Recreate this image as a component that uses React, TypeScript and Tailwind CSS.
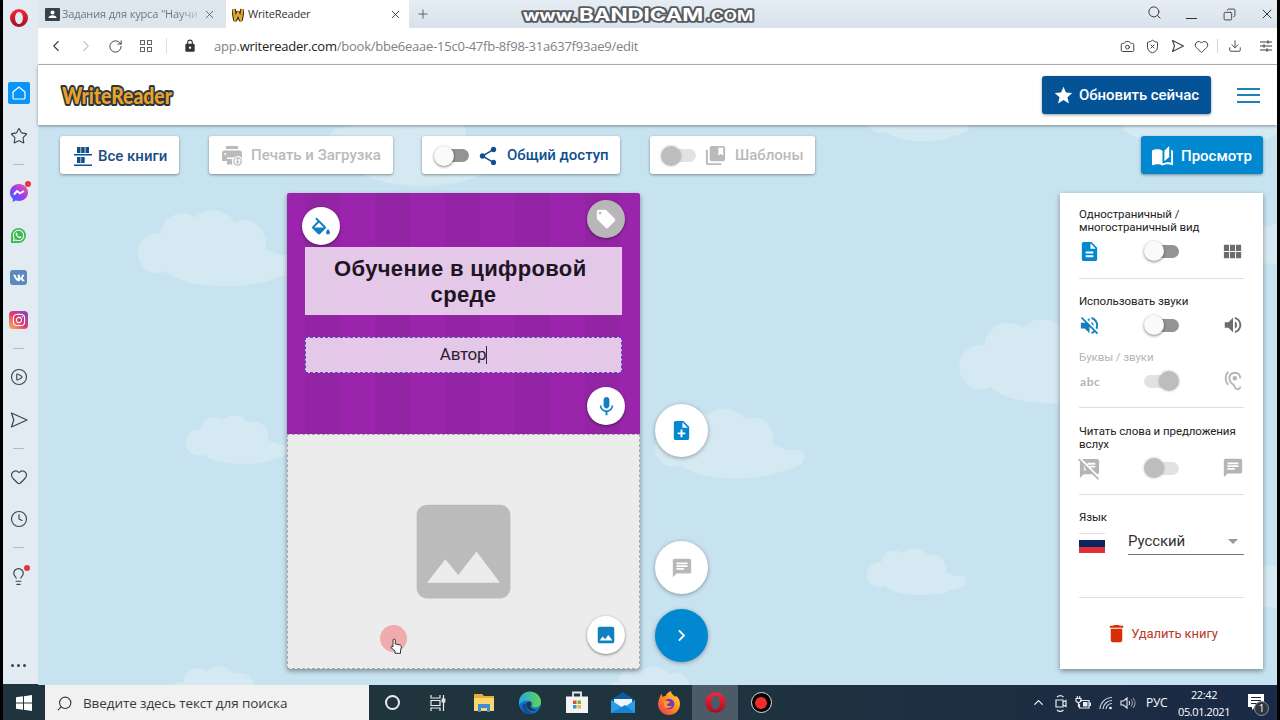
import type { ReactNode } from "react";
import {
  MdAutoStories,
  MdChat,
  MdChevronRight,
  MdCollectionsBookmark,
  MdDelete,
  MdDescription,
  MdHearing,
  MdImage,
  MdLocalOffer,
  MdLock,
  MdMic,
  MdNoteAdd,
  MdShare,
  MdSpeakerNotesOff,
  MdStar,
  MdViewModule,
  MdVolumeOff,
  MdVolumeUp,
} from "react-icons/md";
import { FaInstagram, FaVk, FaWhatsapp } from "react-icons/fa";
import {
  Camera,
  ChevronLeft,
  ChevronRight,
  ChevronUp,
  CirclePlay,
  Clock4,
  Copy,
  Download,
  Heart,
  Lightbulb,
  Plus,
  RotateCw,
  Search,
  ShieldX,
  Star,
  X,
} from "lucide-react";

function Toggle({ on = false, disabled = false }: { on?: boolean; disabled?: boolean }) {
  return (
    <span className={`flex h-5 w-[35px] items-center ${on ? "flex-row-reverse" : ""}`}>
      <span
        className={`z-10 h-5 w-5 shrink-0 rounded-full ${
          disabled
            ? "bg-[#bdbdbd] shadow-[0_0_3px_rgba(0,0,0,0.25)]"
            : "bg-[#fafafa] shadow-[0_1px_3px_rgba(0,0,0,0.5)]"
        }`}
      />
      <span
        className={`h-[13px] w-[25px] shrink-0 ${
          on ? "-mr-[10px] rounded-l-full" : "-ml-[10px] rounded-r-full"
        } ${disabled ? "bg-[#e2e2e2]" : "bg-[#939393]"}`}
      />
    </span>
  );
}

function OperaLogo({ className }: { className?: string }) {
  return (
    <svg viewBox="0 0 20 20" className={className}>
      <defs>
        <linearGradient id="opera" x1="0" y1="0" x2="0" y2="1">
          <stop offset="0" stopColor="#f8273f" />
          <stop offset="1" stopColor="#a70d20" />
        </linearGradient>
      </defs>
      <path
        fill="url(#opera)"
        fillRule="evenodd"
        d="M10 1a9 9 0 1 0 0 18 9 9 0 0 0 0-18Zm0 3c2.3 0 3.9 2.7 3.9 6s-1.6 6-3.9 6-3.9-2.7-3.9-6 1.6-6 3.9-6Z"
      />
    </svg>
  );
}

function SideCell({ children, dot = false }: { children: ReactNode; dot?: boolean }) {
  return (
    <div className="flex h-[42.5px] w-full shrink-0 items-center justify-center pr-1">
      <div className="relative">
        {children}
        {dot && <span className="absolute -top-0.5 -right-0.5 h-1.5 w-1.5 rounded-full bg-[#e8343c]" />}
      </div>
    </div>
  );
}

function SideDivider() {
  return (
    <div className="flex h-[14.5px] w-full shrink-0 items-center justify-center pr-1">
      <span className="h-px w-[11px] bg-[#b3bcc4]" />
    </div>
  );
}

function Sidebar() {
  return (
    <aside className="flex w-[35px] shrink-0 flex-col items-center bg-[#e2ebf2] text-[#3c4248]">
      <div className="flex h-[72px] w-full items-start justify-center pt-2 pr-1">
        <OperaLogo className="h-5 w-5" />
      </div>
      <SideCell>
        <div className="flex h-[22px] w-[22px] items-center justify-center rounded-[2px] bg-[#0a93fb]">
          <svg viewBox="0 0 16 16" className="h-4 w-4" fill="none" stroke="#fff" strokeWidth="1.2" strokeLinejoin="round">
            <path d="M2 7 8 2l6 5v5.500a1.500 1.500 0 0 1-1.500 1.500h-9A1.500 1.500 0 0 1 2 12.500Z" />
          </svg>
        </div>
      </SideCell>
      <SideCell>
        <Star size={18} strokeWidth={1.5} />
      </SideCell>
      <SideDivider />
      <SideCell dot>
        <svg viewBox="0 0 20 20" className="h-5 w-5">
          <defs>
            <linearGradient id="messenger" x1="0" y1="1" x2="1" y2="0">
              <stop offset="0" stopColor="#2b6bff" />
              <stop offset="0.5" stopColor="#9b3cf5" />
              <stop offset="1" stopColor="#ff5a7e" />
            </linearGradient>
          </defs>
          <path fill="url(#messenger)" d="M10 1C4.800 1 1 4.700 1 9.500c0 2.700 1 4.800 2.800 6.300V19l2.800-1.500c1 .3 2.200.5 3.400.5 5.200 0 9-3.700 9-8.500S15.200 1 10 1Z" />
          <path d="m5 11.500 3-3.500 3 2.300L15 8" fill="none" stroke="#fff" strokeWidth="2" />
        </svg>
      </SideCell>
      <SideCell>
        <div className="flex h-[15px] w-[15px] items-center justify-center rounded-full rounded-bl-[3px] bg-[#3fb955] text-white">
          <FaWhatsapp size={13} />
        </div>
      </SideCell>
      <SideCell>
        <div className="flex h-[15px] w-[17px] items-center justify-center rounded-[3px] bg-[#5b88bd] text-white">
          <FaVk size={12} />
        </div>
      </SideCell>
      <SideCell>
        <div className="flex h-[18px] w-[19px] items-center justify-center rounded-[4px] bg-linear-to-tr from-[#fdb34a] via-[#e2306e] to-[#7a3bc9] text-white">
          <FaInstagram size={14} />
        </div>
      </SideCell>
      <SideDivider />
      <SideCell>
        <CirclePlay size={18} strokeWidth={1.5} />
      </SideCell>
      <SideCell>
        <svg viewBox="0 0 18 18" className="h-[18px] w-[18px]" fill="none" stroke="currentColor" strokeWidth="1.2" strokeLinejoin="round">
          <path d="m1.500 2 15.500 7-15.500 7 2.300-7Z" />
        </svg>
      </SideCell>
      <SideDivider />
      <SideCell>
        <Heart size={18} strokeWidth={1.5} />
      </SideCell>
      <SideCell>
        <Clock4 size={18} strokeWidth={1.5} />
      </SideCell>
      <SideDivider />
      <SideCell dot>
        <Lightbulb size={19} strokeWidth={1.5} />
      </SideCell>
      <div className="mt-auto flex w-full justify-center gap-[3px] pr-1 pb-[17px]">
        <span className="h-[3px] w-[3px] rounded-full bg-[#3c4248]" />
        <span className="h-[3px] w-[3px] rounded-full bg-[#3c4248]" />
        <span className="h-[3px] w-[3px] rounded-full bg-[#3c4248]" />
      </div>
    </aside>
  );
}

function TabBar() {
  return (
    <div className="relative flex h-7 shrink-0 items-stretch bg-linear-to-b from-[#e6edf4] to-[#d9e2eb] font-['Open_Sans','Noto_Sans',sans-serif] text-[11px] tracking-[-0.15px] text-[#4b545c]">
      <div className="flex w-[188px] items-center bg-[#dde5ed] pl-[7px] pr-2.5">
        <svg viewBox="0 0 15 13" className="h-[13px] w-[15px] shrink-0">
          <rect width="15" height="13" rx="1" fill="#37424b" />
          <circle cx="7.500" cy="4.500" r="2" fill="#fff" />
          <path d="M3.500 10c0-2 2-2.800 4-2.800s4 .8 4 2.800Z" fill="#fff" />
        </svg>
        <span className="ml-[2px] bg-linear-to-r from-[#6a737b] from-85% to-[#c3cad1] bg-clip-text whitespace-nowrap text-transparent">
          Задания для курса "Научи
        </span>
        <X size={13} strokeWidth={1.500} className="ml-auto shrink-0" />
      </div>
      <div className="flex w-[183px] items-center bg-white pr-[7px] pl-[6px]">
        <svg viewBox="0 0 12 15" className="h-[15px] w-3 shrink-0">
          <path d="M1.500 2 3.200 12.500 6 6l2.800 6.500L10.500 2" fill="none" stroke="#2c2c2c" strokeWidth="4.500" strokeLinejoin="round" />
          <path d="M1.500 2 3.200 12.500 6 6l2.800 6.500L10.500 2" fill="none" stroke="#e9a52b" strokeWidth="2.300" />
        </svg>
        <span className="ml-1 text-[#333]">WriteReader</span>
        <X size={13} strokeWidth={1.5} className="ml-auto text-[#222]" />
      </div>
      <div className="flex items-center pl-[7px]">
        <Plus size={14} strokeWidth={1.5} />
      </div>
      <div className="ml-auto flex items-center text-[#333]">
        <Search size={15} strokeWidth={1.5} className="mr-[24px] -mt-1" />
        <span className="mt-[9px] mr-[26px] h-px w-[11px] bg-[#333]" />
        <Copy size={13} strokeWidth={1.6} className="mr-[23px] -scale-x-100" />
        <X size={16} strokeWidth={1.5} className="mr-[2px]" />
      </div>
      <svg viewBox="0 0 240 28" className="absolute top-0 left-[481px] h-7 w-60 font-['Inter',sans-serif] font-bold">
        <g fill="#fff" stroke="#555b60" strokeWidth="3.500" strokeLinejoin="round" paintOrder="stroke">
          <text x="4" y="21" fontSize="15" textLength="54" lengthAdjust="spacingAndGlyphs">www.</text>
          <text x="60" y="21" fontSize="18" textLength="124" lengthAdjust="spacingAndGlyphs">BANDICAM</text>
          <text x="187" y="21" fontSize="14" textLength="47" lengthAdjust="spacingAndGlyphs">.COM</text>
        </g>
      </svg>
    </div>
  );
}

function AddressBar() {
  return (
    <div className="flex h-[37px] shrink-0 items-center border-b border-[#b4b7ba] bg-white pl-[9px] text-[#3c4248]">
      <ChevronLeft size={18} strokeWidth={1.5} />
      <ChevronRight size={18} strokeWidth={1.5} className="ml-[12px] text-[#c4c8cc]" />
      <RotateCw size={15} strokeWidth={1.6} className="ml-[13px]" />
      <div className="ml-[17px] grid grid-cols-2 gap-[2px]">
        <span className="h-[5px] w-[5px] border border-[#666]" />
        <span className="h-[5px] w-[5px] border border-[#666]" />
        <span className="h-[5px] w-[5px] border border-[#666]" />
        <span className="h-[5px] w-[5px] border border-[#666]" />
      </div>
      <span className="ml-[14px] h-4 w-px bg-[#dcdfe2]" />
      <MdLock size={14} className="ml-[16px] text-[#333]" />
      <span className="ml-[17px] pt-px font-['Open_Sans','Noto_Sans',sans-serif] text-[13px] tracking-[-0.23px] text-[#7c8389]">
        app.<span className="text-[#222]">writereader.com</span>/book/bbe6eaae-15c0-47fb-8f98-31a637f93ae9/edit
      </span>
      <div className="ml-auto flex items-center pr-[5px]">
        <Camera size={15} strokeWidth={1.6} />
        <ShieldX size={15} strokeWidth={1.6} className="ml-[10px]" />
        <svg viewBox="0 0 14 14" className="ml-[11px] h-[14px] w-[14px]" fill="none" stroke="currentColor" strokeWidth="1.1" strokeLinejoin="round">
          <path d="m1.500 1.500 11 5.500-11 5.500L3.500 7Z" />
        </svg>
        <Heart size={15} strokeWidth={1.6} className="ml-[9px]" />
        <span className="mx-[8px] h-3.5 w-px bg-[#d3d6d9]" />
        <Download size={14} strokeWidth={1.6} className="ml-[2px]" />
        <svg viewBox="0 0 12 12" className="ml-[18px] h-3 w-3" stroke="currentColor" strokeWidth="1.100">
          <path d="M0 2h12M0 6h12M0 10h12M8 .3v3.400M4 4.300v3.400M7 8.300v3.400" />
        </svg>
      </div>
    </div>
  );
}

const clouds = [
  { x: 100, y: 85, w: 162 },
  { x: 148, y: 290, w: 104 },
  { x: 617, y: 283, w: 150 },
  { x: 829, y: 423, w: 100 },
  { x: 921, y: 194, w: 180 },
  { x: 286, y: -24, w: 180 },
  { x: 830, y: -32, w: 102 },
  { x: 1082, y: -50, w: 160 },
  { x: 1200, y: 98, w: 90 },
  { x: 1190, y: 440, w: 90 },
  { x: 130, y: 541, w: 110 },
  { x: 565, y: 541, w: 110 },
];

function Clouds() {
  return (
    <svg viewBox="0 0 1239 559" className="absolute inset-0 h-full w-full">
      <defs>
        <symbol id="cloud" viewBox="0 0 162 76">
          <g fill="#d5e9f3">
            <circle cx="20" cy="43" r="20" />
            <circle cx="44" cy="24" r="21" />
            <circle cx="75" cy="26" r="26" />
            <circle cx="106" cy="32" r="22" />
            <rect x="20" y="27" width="100" height="32" rx="12" />
            <ellipse cx="88" cy="55" rx="62" ry="21" />
            <path d="M110 45h42c13 0 13 15-4 20-20 6-40 3-40 3Z" />
          </g>
        </symbol>
      </defs>
      {clouds.map((c, i) => (
        <use key={i} href="#cloud" x={c.x} y={c.y} width={c.w} height={c.w * 0.47} />
      ))}
    </svg>
  );
}

function Header() {
  return (
    <header className="z-10 flex h-[60px] shrink-0 items-center bg-white pr-[17px] pl-5 shadow-[0_1px_3px_rgba(0,0,0,0.4)]">
      <svg viewBox="0 0 120 40" className="h-10 w-[120px] overflow-visible font-['Lato',sans-serif] font-black">
        <text
          x="4"
          y="28.500"
          fontSize="23"
          textLength="110"
          lengthAdjust="spacingAndGlyphs"
          fill="#eaa22c"
          stroke="#29363c"
          strokeWidth="4"
          strokeLinejoin="round"
          paintOrder="stroke"
        >
          WriteReader
        </text>
      </svg>
      <button className="ml-auto flex h-[38px] w-[169px] items-center rounded-[3px] bg-[#055397] pl-[11px] text-[15px] font-medium tracking-[-0.05px] text-white shadow-[0_1px_3px_rgba(0,0,0,0.4)]">
        <MdStar size={21} className="mr-[5px]" />
        Обновить сейчас
      </button>
      <div className="ml-[26px] flex w-[23px] flex-col gap-[4.500px]">
        <span className="h-[2px] bg-[#1c81b9]" />
        <span className="h-[2px] bg-[#1c81b9]" />
        <span className="h-[2px] bg-[#1c81b9]" />
      </div>
    </header>
  );
}

const toolButton =
  "flex h-[38px] items-center rounded-[3px] bg-white text-[15px] font-medium whitespace-nowrap shadow-[0_1px_3px_rgba(0,0,0,0.4)]";

function Toolbar() {
  return (
    <div className="flex">
      <button className={`${toolButton} w-[119px] pt-0.5 pl-[14px] text-[#1a4d82]`}>
        <svg viewBox="0 0 18 19" className="mr-[6px] h-[19px] w-[18px]" fill="#0f4f8f">
          <path d="M3 0h3.500v6H3zM7.200 0h3.500v6H7.200zM11.500 0H15v6h-3.500zM0 7h18v1.500H0zM3 10h3.500v6H3zM7.200 10h3.500v6H7.200zM0 17.500h18V19H0z" />
        </svg>
        Все книги
      </button>
      <button className={`${toolButton} ml-[30px] w-[184px] pt-px pl-[13px] text-[#bababa]`}>
        <svg viewBox="0 0 20 20" className="mr-[9px] h-5 w-5" fill="#bababa">
          <path d="M4 0h12v3H4zM2.500 4.500h15A2.500 2.500 0 0 1 20 7v5.500a5 5 0 0 0-8-1H5V15H0V7a2.500 2.500 0 0 1 2.500-2.500ZM5 13h5.500c-.7 1.800-.7 3.500 0 5.500H5Z" />
          <circle cx="15.500" cy="15.500" r="3.700" fill="none" stroke="#bababa" strokeWidth="1.300" />
          <path d="M15 12.800h1.200v3h1.500l-2.100 2.300-2.100-2.300H15Z" />
          <circle cx="3.200" cy="8" r="1" fill="#fff" />
        </svg>
        Печать и Загрузка
      </button>
      <button className={`${toolButton} ml-[29px] w-[198px] pt-px pl-3 text-[#0f4f8f]`}>
        <Toggle />
        <MdShare size={22} className="mr-[8px] ml-[8px]" />
        Общий доступ
      </button>
      <button className={`${toolButton} ml-[30px] w-[165px] pt-px pl-[11px] text-[#bababa]`}>
        <Toggle disabled />
        <MdCollectionsBookmark size={23} className="mr-[8px] ml-[8px]" />
        Шаблоны
      </button>
      <button className="ml-auto flex h-[38px] w-[122px] items-center rounded-[3px] bg-[#0288d1] pt-0.5 pl-[10px] text-[15px] font-medium text-white shadow-[0_1px_3px_rgba(0,0,0,0.4)]">
        <MdAutoStories size={23} className="mr-[7px]" />
        Просмотр
      </button>
    </div>
  );
}

const roundButton =
  "absolute flex h-[38px] w-[38px] items-center justify-center rounded-full shadow-[0_1px_3px_rgba(0,0,0,0.45)]";

function Book() {
  return (
    <div className="relative flex w-[353px] flex-col rounded-[2px] shadow-[0_2px_5px_rgba(0,0,0,0.4)]">
      <div className="h-[241px] rounded-t-[2px] bg-[repeating-linear-gradient(90deg,#9b24ad_0px,#9b24ad_18px,#9324a4_18px,#9324a4_53px,#9b24ad_53px,#9b24ad_70px)] px-[18px] pt-[54px]">
        <div className="h-[68px] bg-white/75 px-4 pt-[9px] text-center font-['Liberation_Sans',Arial,sans-serif] text-[22px] leading-[26px] font-bold tracking-[0.35px] text-[#1d1424]">
          Обучение в цифровой&nbsp;
          <br />
          среде
        </div>
        <div className="mt-[22px] flex h-9 items-center justify-center border border-dashed border-[#5a45c4] bg-white/75 text-[17px] tracking-[-0.3px] text-[#2a2032]">
          Автор
          <span className="h-[18px] w-px bg-[#33263b]" />
        </div>
      </div>
      <div className="flex flex-1 items-center justify-center border border-dashed border-[#a9a9a9] bg-[#ececec] text-[#bbb]">
        <MdImage size={125} />
      </div>
      <span className={`${roundButton} top-[14px] left-[15px] bg-white text-[#1280c0]`}>
        <svg viewBox="0 -3.500 24 24" className="h-6 w-6" fill="currentColor">
          <path d="M16.560 8.940 7.620 0 6.210 1.410l2.380 2.380-5.150 5.150a1.490 1.490 0 0 0 0 2.120l5.500 5.500c.29.290.68.440 1.060.440s.77-.15 1.060-.44l5.500-5.500c.59-.58.59-1.530 0-2.120zM5.210 10 10 5.210 14.790 10zM19 11.500s-2 2.170-2 3.500c0 1.100.9 2 2 2s2-.9 2-2c0-1.330-2-3.500-2-3.500z" />
        </svg>
      </span>
      <span className={`${roundButton} top-[7px] right-[15px] bg-[#b9b6b9] text-white`}>
        <MdLocalOffer size={22} />
      </span>
      <span className={`${roundButton} top-[194px] right-[15px] bg-white text-[#1280c0]`}>
        <MdMic size={23} />
      </span>
      <span className={`${roundButton} right-[15px] bottom-[15px] bg-white text-[#1280c0]`}>
        <MdImage size={22} />
      </span>
      <span className="absolute top-[432px] left-[93px] h-[27px] w-[27px] rounded-full bg-[#f0abae]" />
      <svg viewBox="0 0 12 16" className="absolute top-[445px] left-[103px] h-4 w-3">
        <path
          d="M3 9V2a1.200 1.200 0 0 1 2.300 0v4l4.700 1c1 .3 1.500 1 1.300 2L10.500 13v2.300H5V13L1 9.600C.7 8 2 8 3 9Z"
          fill="#fff"
          stroke="#222"
          strokeWidth="0.9"
        />
      </svg>
    </div>
  );
}

const fab =
  "flex h-[53px] w-[53px] items-center justify-center rounded-full shadow-[0_1px_4px_rgba(0,0,0,0.35)]";

function PageActions() {
  return (
    <div className="ml-[15px] flex flex-col justify-end pb-[7px]">
      <button className={`${fab} mb-[84px] bg-white text-[#0288d1]`}>
        <MdNoteAdd size={23} />
      </button>
      <button className={`${fab} mb-[15px] bg-white text-[#b8b8b8]`}>
        <MdChat size={22} />
      </button>
      <button className={`${fab} bg-[#0288d1] text-white`}>
        <MdChevronRight size={23} />
      </button>
    </div>
  );
}

interface SettingRowProps {
  left: ReactNode;
  right: ReactNode;
  on?: boolean;
  disabled?: boolean;
}

function SettingRow({ left, right, on, disabled }: SettingRowProps) {
  return (
    <div className={`mt-[5px] flex h-6 items-center justify-between ${disabled ? "text-[#b5b5b5]" : "text-[#6c6c6c]"}`}>
      <span className="-ml-px flex w-10">{left}</span>
      <Toggle on={on} disabled={disabled} />
      <span className="flex w-10 justify-end">{right}</span>
    </div>
  );
}

function SettingsPanel() {
  return (
    <section className="ml-auto w-[203px] bg-white px-[19px] pt-[15px] text-[11.5px] leading-[13px] tracking-[-0.08px] text-[#222] shadow-[0_2px_5px_rgba(0,0,0,0.4)]">
      <div className="h-[71px] border-b border-[#dedede]">
        <p>
          Одностраничный /<br />
          многостраничный вид
        </p>
        <SettingRow left={<MdDescription size={23} className="text-[#0288d1]" />} right={<MdViewModule size={23} />} />
      </div>
      <div className="h-[129px] border-b border-[#dedede] pt-4">
        <p>Использовать звуки</p>
        <SettingRow left={<MdVolumeOff size={23} className="text-[#1280c0]" />} right={<MdVolumeUp size={22} />} />
        <p className="mt-[14px] text-[#b5b5b5]">Буквы / звуки</p>
        <SettingRow
          left={<span className="ml-[2px] font-['Lato',sans-serif] text-[12px] font-bold tracking-[0.6px]">abc</span>}
          right={<MdHearing size={22} />}
          on
          disabled
        />
      </div>
      <div className="h-[87px] border-b border-[#dedede] pt-[17px]">
        <p className="whitespace-nowrap">
          Читать слова и предложения
          <br />
          вслух
        </p>
        <SettingRow left={<MdSpeakerNotesOff size={23} />} right={<MdChat size={22} />} disabled />
      </div>
      <div className="h-[103px] border-b border-[#dedede] pt-4">
        <p>Язык</p>
        <div className="mt-[5px] flex">
          <div className="mt-[4px] flex h-5 w-[26px] flex-col border-t border-[#dedede]">
            <span className="flex-1" />
            <span className="h-[6.500px] bg-[#0c2460]" />
            <span className="h-[6.500px] bg-[#df3038]" />
          </div>
          <div className="ml-[23px] flex h-[26px] flex-1 items-center border-b border-[#777] text-[15px] text-[#333]">
            Русский
            <span className="mr-[6px] ml-auto h-0 w-0 border-x-[5px] border-t-[5px] border-x-transparent border-t-[#999]" />
          </div>
        </div>
      </div>
      <div className="flex h-[71px] items-center justify-center text-[13px] text-[#b8392a]">
        <MdDelete size={23} className="mr-[3px] text-[#d92f06]" />
        Удалить книгу
      </div>
    </section>
  );
}

function Editor() {
  return (
    <main className="relative flex-1 bg-[#c8e3f0]">
      <Clouds />
      <div className="relative flex h-full flex-col pt-[11px] pr-[14px] pb-[15.500px] pl-[22px]">
        <Toolbar />
        <div className="mt-[19px] flex flex-1 pl-[227px]">
          <Book />
          <PageActions />
          <SettingsPanel />
        </div>
      </div>
    </main>
  );
}

function TaskIcon({ children, active = false }: { children: ReactNode; active?: boolean }) {
  return (
    <div className={`flex w-[46.150px] items-center justify-center ${active ? "bg-[#4b5c66]" : ""}`}>
      {children}
    </div>
  );
}

function Taskbar() {
  return (
    <footer className="flex h-9 shrink-0 bg-linear-to-r from-[#20343e] via-[#20343e] to-[#1a2945] pt-px font-['Open_Sans','Noto_Sans',sans-serif] text-white">
      <div className="flex w-[42px] items-center justify-center">
        <svg viewBox="0 0 16 16" className="h-4 w-4" fill="#fff">
          <path d="m0 2.300 7-1v6.200H0zM8 1.200 16 0v7.500H8zM0 8.500h7v6.200l-7-1zM8 8.500h8V16l-8-1.200z" />
        </svg>
      </div>
      <div className="flex w-[324px] items-center bg-[#f1f1f1] pt-px pl-[11px] text-[13.5px] tracking-[-0.1px] text-[#3a3a3a]">
        <Search size={17} strokeWidth={1.6} className="mr-[10px] -scale-x-100" />
        Введите здесь текст для поиска
      </div>
      <TaskIcon>
        <span className="h-[15px] w-[15px] rounded-full border-2 border-[#e8ecee]" />
      </TaskIcon>
      <TaskIcon>
        <svg viewBox="0 0 16 16" className="h-4 w-4" fill="none" stroke="#e8ecee" strokeWidth="1.200">
          <path d="M1 0v3h9V0M1 16v-3h9v3M1 5.500h9v5H1zM13.500 0v16M12.200 4h2.600v3h-2.600z" />
        </svg>
      </TaskIcon>
      <TaskIcon>
        <svg viewBox="0 0 22 20" className="h-5 w-[22px]">
          <path d="M1 1h8l2 2h10v15H1z" fill="#e9ad35" />
          <path d="M1 5h20v13H1z" fill="#fbd670" />
          <path d="M5 11h12v8h-3v-4H8v4H5z" fill="#3f8ed2" />
        </svg>
      </TaskIcon>
      <TaskIcon>
        <svg viewBox="0 0 24 24" className="h-6 w-6">
          <defs>
            <linearGradient id="edge" x1="0" y1="0" x2="1" y2="0">
              <stop offset="0" stopColor="#26a6e0" />
              <stop offset="1" stopColor="#63d653" />
            </linearGradient>
          </defs>
          <circle cx="12" cy="12" r="11" fill="#1471c7" />
          <path d="M1 12A11 11 0 0 1 23 11c0 4-3 5.500-6 5.500-2.500 0-3.500-1-3-2 .8-1.200.5-4-2.500-4.500C6 9 2 11 1 15Z" fill="url(#edge)" />
          <path d="M8.500 13c0 5 4.500 8 9 6.500l4-2c-3 2-8 1.500-9-1.500-.5-1.300.6-2 .5-3.500-.4-2.500-4.500-2.500-4.500.5Z" fill="#20343e" />
          <path d="M8.500 13c-.5 6 3 9 8 9-6 2.500-12-1-12.500-6.500 0-2 2-4 4.500-2.500Z" fill="#124b9b" />
        </svg>
      </TaskIcon>
      <TaskIcon>
        <svg viewBox="0 0 22 23" className="h-[23px] w-[22px]">
          <path d="M7 6V1.500h8V6" fill="none" stroke="#e8ecee" strokeWidth="1.800" />
          <path d="M0 5.500h22V22H0z" fill="#f4f4f4" />
          <path d="M7 9.500h3.500V13H7z" fill="#e1502c" />
          <path d="M11.500 9.500H15V13h-3.500z" fill="#7eb32f" />
          <path d="M7 14h3.500v3.500H7z" fill="#2b9ad8" />
          <path d="M11.500 14H15v3.500h-3.500z" fill="#f0b72c" />
        </svg>
      </TaskIcon>
      <TaskIcon>
        <svg viewBox="0 0 24 22" className="h-[22px] w-6">
          <path d="M0 8 12 0l12 8v13H0z" fill="#0c5aa5" />
          <path d="M3 7h18v8H3z" fill="#eef6fb" />
          <path d="m0 8 12 8 12-8v13H0z" fill="#2a9fe6" />
          <path d="M0 21 14 13l10 8z" fill="#1a82d1" />
        </svg>
      </TaskIcon>
      <TaskIcon>
        <svg viewBox="0 0 24 26" className="h-[26px] w-6">
          <defs>
            <linearGradient id="firefox" x1="1" y1="0" x2="0" y2="1">
              <stop offset="0" stopColor="#ffe14a" />
              <stop offset="0.500" stopColor="#ff8a20" />
              <stop offset="1" stopColor="#e92c55" />
            </linearGradient>
          </defs>
          <path d="M3 7c0-1 .7-2 1.500-3l1 3c1-.7 2-1 3-1 1-2 2.500-4 5.500-5 0 3 3 4 4 6l.8-1.200C22 8 23 11 23 14a11 11 0 0 1-22 0c0-3 1-5 2-7Z" fill="url(#firefox)" />
          <circle cx="12" cy="14" r="5.300" fill="#7139bd" />
          <path d="M6.500 11c2-1 3.500-.7 5 .3l2 .7c-1 1.500-3 1.200-3.500 3 1 1.500 3 1.500 5 .5-1 3-6 4-8 1Z" fill="#ff9824" />
        </svg>
      </TaskIcon>
      <TaskIcon active>
        <OperaLogo className="h-[23px] w-[23px]" />
      </TaskIcon>
      <TaskIcon>
        <span className="flex h-[21px] w-[21px] items-center justify-center rounded-full border-[1.500px] border-[#dedede] bg-black">
          <span className="h-3 w-3 rounded-full bg-[#f02c2c]" />
        </span>
      </TaskIcon>
      <div className="ml-auto flex items-center pr-[11px] text-[12px]">
        <ChevronUp size={15} strokeWidth={1.800} />
        <svg viewBox="0 0 14 18" className="ml-[8px] h-[18px] w-[14px]" fill="none" stroke="#e8ecee" strokeWidth="1.200">
          <path d="M2 6h7v7H2zM9 8l3-1.500v6L9 11M3 3c2-1.800 4.500-1.800 6.500 0M3 16c2 1.800 4.500 1.800 6.500 0" />
        </svg>
        <svg viewBox="0 0 16 14" className="ml-[7px] h-[14px] w-4" fill="none" stroke="#e8ecee" strokeWidth="1.200">
          <path d="M5 4.500h9v7.500H4.500V8M14 7h1.500v2.500H14M1 2.500h5v2.700L3.500 7 1 5.200ZM2.300 0v2.500M4.700 0v2.500M3.500 7v4" />
          <path d="M8 6h4.500v4.500H8z" fill="#e8ecee" stroke="none" />
        </svg>
        <svg viewBox="0 0 14 14" className="ml-[8px] h-[14px] w-[14px]" fill="none" stroke="#c9d0d6" strokeWidth="1.200">
          <path d="M1 13A12 12 0 0 1 13 1.500M4 13a9 9 0 0 1 9-8.500M7 13a6 6 0 0 1 6-5.500" />
          <circle cx="11.500" cy="12" r="1.300" fill="#fff" stroke="none" />
        </svg>
        <svg viewBox="0 0 16 14" className="ml-[7px] h-[14px] w-4" fill="none" stroke="#e8ecee" strokeWidth="1.100">
          <path d="M1 5h2.500L7 2v10L3.500 9H1ZM9 5c.8 1.200.8 2.800 0 4" />
          <path d="M11 3.500c1.700 2 1.700 5 0 7M13 2c2.500 3 2.500 7 0 10" stroke="#8f99a3" />
        </svg>
        <span className="ml-[10px] w-[22px] tracking-[-0.3px]">РУС</span>
        <div className="ml-[10px] w-[52px] text-center text-[11px] leading-[17px] tracking-[-0.4px]">
          <div>22:42</div>
          <div>05.01.2021</div>
        </div>
        <div className="relative mt-1 ml-[18px] h-[21px] w-[18px]">
          <svg viewBox="0 0 17 16" className="h-4 w-[17px]">
            <path d="M0 0h16v13H7l-3 3v-3H0z" fill="#fff" />
            <path d="M3 3.500h10M3 6.500h10M3 9.500h7" stroke="#1a2945" />
          </svg>
          <span className="absolute top-[7px] left-[6px] flex h-[15px] w-[15px] items-center justify-center rounded-full border border-[#8b929b] bg-[#2f3640] text-[10px]">
            1
          </span>
        </div>
      </div>
    </footer>
  );
}

export default function App() {
  return (
    <div className="flex h-[720px] w-[1280px] flex-col overflow-hidden bg-black px-[3px] font-['Roboto','Noto_Sans',sans-serif]">
      <div className="flex min-h-0 flex-1">
        <Sidebar />
        <div className="flex min-w-0 flex-1 flex-col">
          <TabBar />
          <AddressBar />
          <Header />
          <Editor />
        </div>
      </div>
      <Taskbar />
    </div>
  );
}
